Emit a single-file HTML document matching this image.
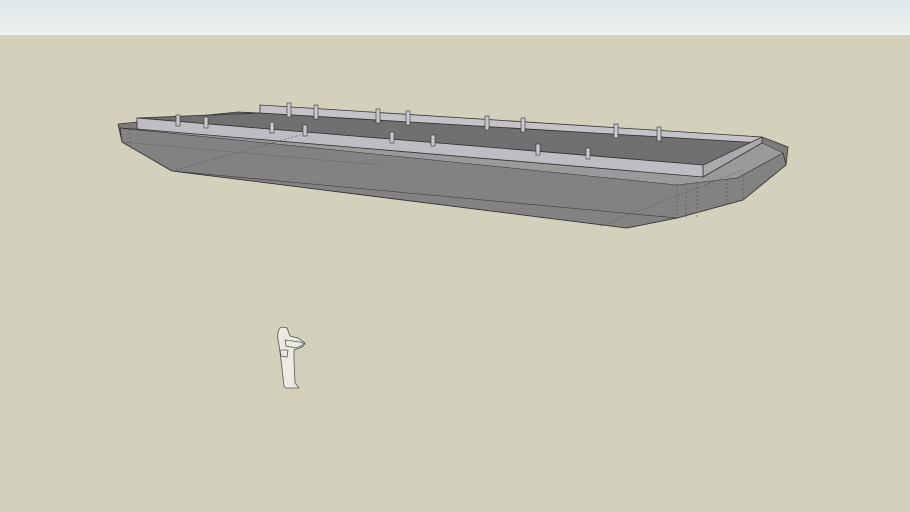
<!DOCTYPE html>
<html><head><style>
html,body{margin:0;padding:0;width:910px;height:512px;overflow:hidden;background:#d3d1bb}
</style></head><body>
<svg width="910" height="512" viewBox="0 0 910 512" xmlns="http://www.w3.org/2000/svg">
<defs>
<linearGradient id="sky" x1="0" y1="0" x2="0" y2="1">
<stop offset="0" stop-color="#dfe7e8"/><stop offset="1" stop-color="#eef2f1"/>
</linearGradient>
</defs>
<rect x="0" y="0" width="910" height="35" fill="url(#sky)"/>
<rect x="0" y="35" width="910" height="477" fill="#d3d1bb"/>
<g stroke="#333" stroke-width="0.8" stroke-linejoin="round">
<polygon points="118,124 238,112 762,137 788,147 786,165 743,200 677,218 627,228 172,171 122,142" fill="#7c7c7c"/>
<polygon points="120,128 677,183 737,178 783,153 786,165 743,200 677,218 627,228 172,171 122,142" fill="#828282"/>
<polygon points="137,129 703,177 762,143 783,153 737,178 677,185 120,128" fill="#9a9a9a" stroke-width="0.5"/>
<polygon points="137,118 260,113 762,143 703,165" fill="#707070"/>
<polygon points="260,105 762,137 762,143 260,113" fill="#c4c4c8"/>
<polygon points="762,137 762,143 703,177 703,165" fill="#a9a9ae"/>
<polygon points="137,118 703,165 703,177 137,129" fill="#bdbdc3"/>
</g>
<g stroke="#555" stroke-width="0.6" stroke-dasharray="2,2" fill="none">
<line x1="122" y1="142" x2="380" y2="165"/>
<line x1="172" y1="171" x2="300" y2="135"/>
<line x1="677" y1="185" x2="677" y2="218"/>
<line x1="686" y1="184" x2="686" y2="220"/>
<line x1="697" y1="183" x2="697" y2="218"/>
<line x1="727" y1="179" x2="727" y2="205"/>
<line x1="743" y1="176" x2="743" y2="200"/>
<line x1="600" y1="226" x2="743" y2="170"/>
<line x1="130" y1="125" x2="130" y2="150"/>
</g>
<line x1="172" y1="171" x2="677" y2="218" stroke="#444" stroke-width="0.7"/>
<g fill="#c8c8cc" stroke="#333" stroke-width="0.6">
<rect x="176" y="115" width="4" height="11"/>
<rect x="204" y="117" width="4" height="11"/>
<rect x="270" y="122" width="4" height="11"/>
<rect x="303" y="125" width="4" height="11"/>
<rect x="390" y="132" width="4" height="11"/>
<rect x="431" y="135" width="4" height="11"/>
<rect x="536" y="144" width="4" height="11"/>
<rect x="586" y="148" width="4" height="11"/>
<rect x="287" y="103" width="4" height="14"/>
<rect x="314" y="105" width="4" height="14"/>
<rect x="376" y="109" width="4" height="14"/>
<rect x="406" y="111" width="4" height="14"/>
<rect x="485" y="116" width="4" height="14"/>
<rect x="521" y="118" width="4" height="14"/>
<rect x="614" y="124" width="4" height="14"/>
<rect x="657" y="127" width="4" height="14"/>
</g>
<g fill="#ecebe2" stroke="#555" stroke-width="0.8">
<path d="M282,327 C277,328 277,338 279,345 L281,360 L284,386 L286,388 L299,388 L295,383 L294,360 L294,350 L302,347 L305,343 L298,338 L290,336 L287,328 Z"/>
<path d="M285,340 L300,342 L305,344 L296,348 L286,346 Z"/>
<path d="M280,350 L288,350 L287,357 L281,356 Z"/>
</g>
</svg>
</body></html>
